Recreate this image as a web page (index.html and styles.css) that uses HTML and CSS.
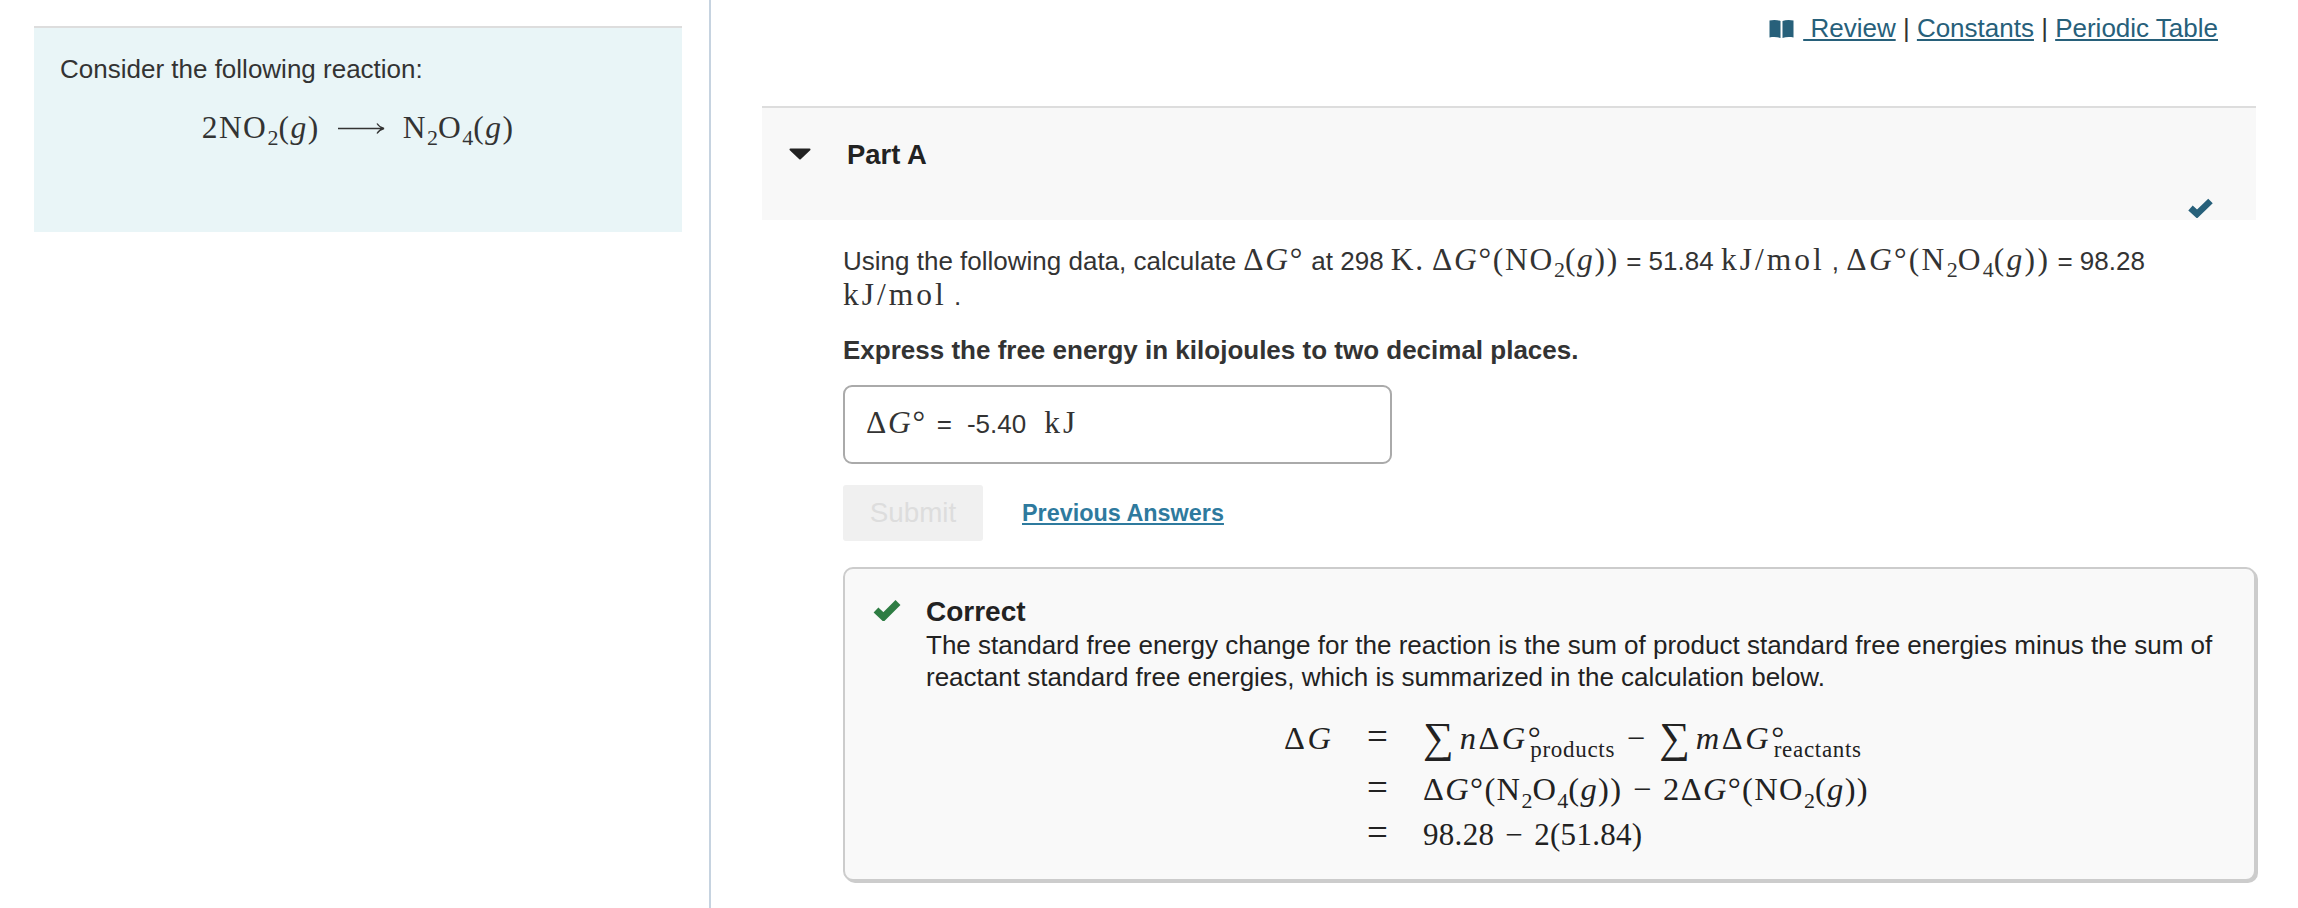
FILE: index.html
```html
<!DOCTYPE html>
<html lang="en">
<head>
<meta charset="utf-8">
<title>Part A</title>
<link rel="stylesheet" href="styles.css">
</head>
<body>
<div class="page">
  <aside class="left">
    <div class="intro">
      <p class="intro-text">Consider the following reaction:</p>
      <div class="intro-eq m">
        <span>2NO<sub>2</sub>(<i>g</i>)</span>
        <svg class="arrow" viewBox="0 0 47 16" width="47" height="16"><path d="M0 8.500H45M39 3.500C40.500 6 42.500 7.600 46 8.500C42.500 9.400 40.500 11 39 13.500" fill="none" stroke="#333" stroke-width="1.300"/></svg>
        <span>N<sub>2</sub>O<sub>4</sub>(<i>g</i>)</span>
      </div>
    </div>
  </aside>
  <main class="right">
    <nav class="toplinks">
      <svg class="book" viewBox="0 0 24 20" width="25" height="20"><path d="M0 1.500C4 .5 8 .8 11 2V19C8 18 4 17.800 0 18.500ZM24 1.500C20 .5 16 .8 13 2V19C16 18 20 17.800 24 18.500Z" fill="#27607a"/></svg>
      <a href="#">&nbsp;Review</a> | <a href="#">Constants</a> | <a href="#">Periodic Table</a>
    </nav>
    <section class="part">
      <header class="part-head">
        <svg class="caret" viewBox="0 0 22 12" width="22" height="12"><path d="M1.500 1.500H20.500L11 10.500Z" fill="#222" stroke="#222" stroke-width="2" stroke-linejoin="round"/></svg>
        <h2 class="part-title">Part A</h2>
        <svg class="part-check" viewBox="0 0 25 20" width="25" height="20"><path d="M2.500 10L9 16L22.500 3" fill="none" stroke="#27607a" stroke-width="6.500"/></svg>
      </header>
      <div class="part-body">
        <p class="question">Using the following data, calculate <span class="m">Δ<i>G</i>°</span> at 298 <span class="m">K.</span> <span class="m">Δ<i>G</i>°(NO<sub>2</sub>(<i>g</i>))</span> = 51.84 <span class="m kj">kJ/mol</span> , <span class="m wider">Δ<i>G</i>°(N<sub>2</sub>O<sub>4</sub>(<i>g</i>))</span> = 98.28 <span class="m kj">kJ/mol</span> .</p>
        <p class="instruction">Express the free energy in kilojoules to two decimal places.</p>
        <div class="answer">
          <span class="m">Δ<i>G</i>°</span><span class="eq-sign">=</span><span class="value">-5.40</span><span class="m kj unit">kJ</span>
        </div>
        <div class="actions">
          <button class="submit" disabled>Submit</button>
          <a class="prev" href="#">Previous Answers</a>
        </div>
        <div class="feedback">
          <svg class="ok" viewBox="0 0 28 22" width="28" height="22"><path d="M3 11L10.500 18L25 3.500" fill="none" stroke="#2e7d43" stroke-width="7"/></svg>
          <div class="fb-main">
            <h3 class="fb-title">Correct</h3>
            <p class="fb-text">The standard free energy change for the reaction is the sum of product standard free energies minus the sum of reactant standard free energies, which is summarized in the calculation below.</p>
            <div class="calc m">
              <span class="row-a">Δ<i>G</i></span><span class="op">=</span>
              <span class="row-a"><span class="sum">∑</span><i class="nv">n</i>Δ<i>G</i><span class="over">°</span><sub class="lbl">products</sub> <span class="minus">−</span> <span class="sum">∑</span><i class="nv">m</i>Δ<i>G</i><span class="over">°</span><sub class="lbl">reactants</sub></span>
              <span></span><span class="op">=</span>
              <span>Δ<i>G</i>°(N<sub>2</sub>O<sub>4</sub>(<i>g</i>)) <span class="minus">−</span> 2Δ<i>G</i>°(NO<sub>2</sub>(<i>g</i>))</span>
              <span></span><span class="op">=</span>
              <span class="nums">98.28 <span class="minus">−</span> 2(51.84)</span>
            </div>
          </div>
        </div>
      </div>
    </section>
  </main>
</div>
</body>
</html>
```
FILE: styles.css
```css
* { box-sizing: border-box; }
html, body { margin: 0; padding: 0; background: #fff; }
body { font-family: "Liberation Sans", Arial, sans-serif; color: #333; font-size: 26px; overflow: hidden; }
p, h2, h3 { margin: 0; }
.page { display: flex; height: 908px; overflow: hidden; }

.m { font-family: "Liberation Serif", "Times New Roman", serif; font-size: 31.500px; letter-spacing: 1.700px; white-space: nowrap; }
.m sub { font-size: 22px; line-height: 0; letter-spacing: 0; }
.kj { letter-spacing: 3px; }
.wider { letter-spacing: 2.300px; }

.left { width: 711px; flex: none; padding: 26px 27px 0 34px; border-right: 2px solid #c6d3e0; }
.intro { height: 206px; border-top: 2px solid #ddd; background: #e9f5f7; padding: 24px 26px 0; }
.intro-text { font-size: 26px; line-height: 34px; }
.intro-eq { display: flex; justify-content: center; align-items: baseline; gap: 18px; margin-top: 22px; line-height: 40px; letter-spacing: 1.500px; }
.arrow { align-self: center; }

.right { flex: 1; min-width: 0; padding: 0 42px 0 51px; }
.toplinks { padding: 11px 38px 0 0; height: 106px; font-size: 26px; line-height: 34px; text-align: right; }
.toplinks a { color: #27607a; }
.book { vertical-align: -2px; margin-right: 2px; }

.part-head { position: relative; display: flex; gap: 36px; height: 114px; padding: 31px 0 0 27px; align-items: flex-start; border-top: 2px solid #ddd; background: #f8f8f8; }
.caret { margin-top: 9px; }
.part-title { font-size: 27.400px; line-height: 32px; font-weight: bold; color: #222; }
.part-check { position: absolute; right: 43px; bottom: 2px; }

.part-body { padding: 22.500px 0 0 81px; }
.question { font-size: 26px; line-height: 34px; padding-right: 60px; }
.instruction { font-size: 26px; font-weight: bold; line-height: 34px; margin-top: 20.500px; }
.answer { display: flex; align-items: baseline; width: 549px; height: 79px; margin-top: 18px; padding: 19px 21px 0; border: 2px solid #aaa; border-radius: 9px; line-height: 34px; }
.eq-sign { margin: 0 15px 0 10px; font-size: 26px; }
.value { font-size: 26px; }
.unit { margin-left: 18px; }

.actions { display: flex; align-items: center; gap: 39px; margin-top: 21px; }
.submit { width: 140px; height: 56px; padding: 0; border: 0; border-radius: 3px; background: #f0f0f0; color: #ddd; font: 27.800px "Liberation Sans", Arial, sans-serif; }
.prev { font-size: 23.400px; font-weight: bold; color: #2e7a9e; }

.feedback { display: flex; align-items: flex-start; gap: 25px; height: 314px; margin-top: 26px; padding: 30px 28px 0; border: 2px solid #ccc; border-radius: 10px; background: #f9f9f9; box-shadow: 2px 2px 0 #ccc; }
.ok { flex: none; }
.fb-main { flex: 1; min-width: 0; margin-top: -3px; color: #222; }
.fb-title { font-size: 28px; line-height: 32px; font-weight: bold; }
.fb-text { font-size: 26px; line-height: 32px; margin-top: 1px; }
.calc { display: grid; grid-template-columns: 83px 56px auto; grid-template-rows: 51px 45px 45px; align-items: baseline; margin: 24.500px 0 0 358px; font-size: 32.500px; letter-spacing: 1.350px; line-height: 1; }
.row-a { letter-spacing: 2.500px; }
.op { font-size: 37px; letter-spacing: 0; }
.sum { font-size: 43px; letter-spacing: 0; line-height: 0; vertical-align: -3px; }
.nv { margin-left: 6px; }
.over { margin-right: -.4em; }
.calc .lbl { font-size: 23px; letter-spacing: .7px; }
.minus { margin: 0 1px; }
.nums { font-size: 31px; letter-spacing: .3px; }
.nums .minus { margin: 0 3px; }
```
